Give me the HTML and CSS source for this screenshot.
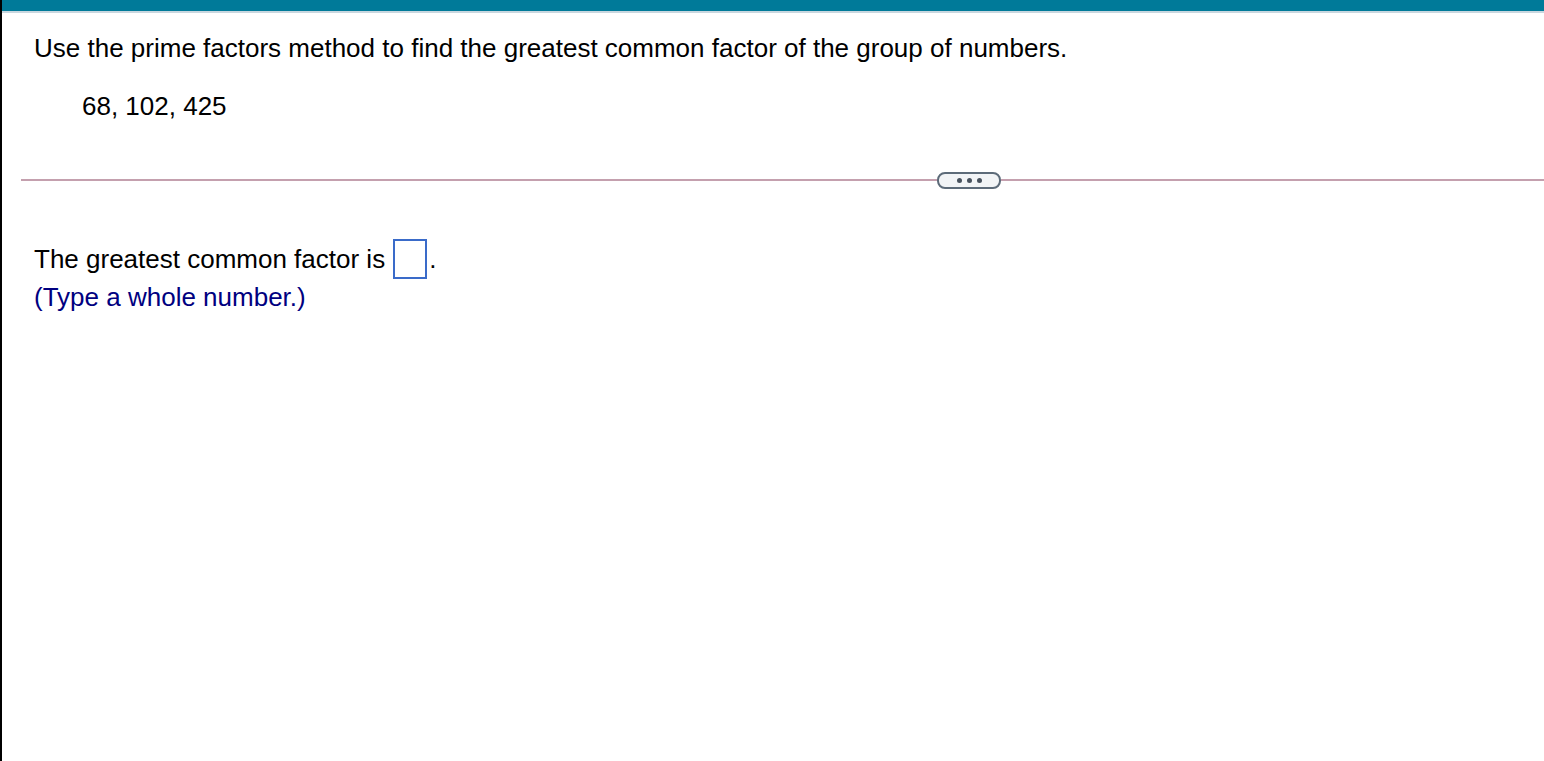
FILE: index.html
```html
<!DOCTYPE html>
<html>
<head>
<meta charset="utf-8">
<link rel="stylesheet" href="styles.css">
</head>
<body>
<div class="page">
  <div class="topbar"></div>
  <div class="topline"></div>
  <div class="content">
    <div class="question">
      <p class="prompt">Use the prime factors method to find the greatest common factor of the group of numbers.</p>
      <p class="numbers">68, 102, 425</p>
    </div>
    <div class="divider">
      <div class="rule rule-left"></div>
      <div class="more"><span class="dot"></span><span class="dot"></span><span class="dot"></span></div>
      <div class="rule"></div>
    </div>
    <div class="answer">
      <p class="line">The greatest common factor is <span class="box"></span>.</p>
      <p class="hint">(Type a whole number.)</p>
    </div>
  </div>
</div>
</body>
</html>
```
FILE: styles.css
```css
html, body {
  margin: 0;
  padding: 0;
  background: #ffffff;
}
body {
  font-family: "Liberation Sans", Arial, sans-serif;
  color: #000000;
}
.page {
  min-height: 761px;
  border-left: 2px solid #000000;
  box-sizing: border-box;
}
.topbar {
  height: 11px;
  background: #007a99;
}
.topline {
  height: 2px;
  background: #c9d7df;
}
.content {
  padding-left: 19px;
}
.question {
  padding-left: 13px;
  padding-top: 20px;
}
.prompt {
  margin: 0;
  font-size: 26px;
  line-height: 30px;
}
.numbers {
  margin: 28px 0 0 48px;
  font-size: 26px;
  line-height: 30px;
}
.divider {
  display: flex;
  align-items: center;
  margin-top: 50px;
  height: 18px;
}
.rule {
  flex: 1;
  height: 2px;
  background: #c4a0ae;
}
.rule-left {
  flex: 0 0 916px;
}
.more {
  width: 60px;
  height: 13px;
  border: 2px solid #5d6b79;
  border-radius: 8px;
  background: #f2f4f6;
  display: flex;
  align-items: center;
  justify-content: center;
  gap: 5px;
}
.dot {
  width: 5px;
  height: 5px;
  border-radius: 50%;
  background: #48525e;
}
.answer {
  padding-left: 13px;
  padding-top: 50px;
}
.line {
  margin: 0;
  font-size: 26px;
  line-height: 40px;
  display: flex;
  align-items: center;
}
.box {
  display: inline-block;
  width: 30px;
  height: 36px;
  border: 2px solid #3a6bc9;
  margin: 0 2px 0 8px;
}
.hint {
  margin: 3px 0 0 0;
  font-size: 26px;
  line-height: 30px;
  color: #000080;
}
```
